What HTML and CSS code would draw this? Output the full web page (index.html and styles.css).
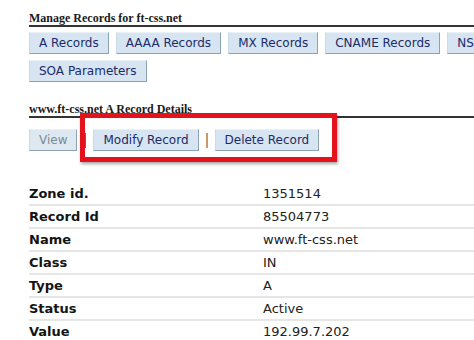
FILE: index.html
```html
<!DOCTYPE html>
<html lang="en">
<head>
    <meta charset="UTF-8">
    <meta name="viewport" content="width=device-width, initial-scale=1.0">
    <title>Manage Records</title>
    <link rel="stylesheet" href="styles.css">
</head>
<body>
    <div class="page">
        <h3 class="section-title">Manage Records for ft-css.net</h3>
        <div class="record-tabs">
            <button class="rec-btn">A Records</button>
            <button class="rec-btn">AAAA Records</button>
            <button class="rec-btn">MX Records</button>
            <button class="rec-btn">CNAME Records</button>
            <button class="rec-btn">NS Records</button>
            <button class="rec-btn">SOA Parameters</button>
        </div>

        <h3 class="section-title details-title">www.ft-css.net A Record Details</h3>
        <div class="actions">
            <button class="rec-btn disabled">View</button>
            <span class="sep"></span>
            <button class="rec-btn">Modify Record</button>
            <span class="sep sep-warm"></span>
            <button class="rec-btn">Delete Record</button>
            <div class="highlight"></div>
        </div>

        <table class="details">
            <tr><th>Zone id.</th><td>1351514</td></tr>
            <tr><th>Record Id</th><td>85504773</td></tr>
            <tr><th>Name</th><td>www.ft-css.net</td></tr>
            <tr><th>Class</th><td>IN</td></tr>
            <tr><th>Type</th><td>A</td></tr>
            <tr><th>Status</th><td>Active</td></tr>
            <tr><th>Value</th><td>192.99.7.202</td></tr>
        </table>
    </div>
</body>
</html>
```

FILE: styles.css
```css
* {
    margin: 0;
    padding: 0;
    box-sizing: border-box;
}

body {
    background: #fff;
    color: #111;
    font-family: 'DejaVu Sans', Verdana, sans-serif;
    overflow: hidden;
}

.page {
    width: 560px;
    padding-left: 29px;
    padding-top: 12px;
}

.section-title {
    font-family: 'Liberation Serif', 'Times New Roman', serif;
    font-size: 12px;
    font-weight: bold;
    line-height: 13px;
    color: #1a1a1a;
    border-bottom: 2px solid #333;
}

.details-title {
    margin-top: 21px;
}

.record-tabs {
    display: flex;
    flex-wrap: wrap;
    column-gap: 7px;
    row-gap: 6px;
    margin-top: 5px;
    width: 520px;
}

.rec-btn {
    height: 22px;
    padding: 0 9px;
    background: #d6e5f1;
    color: #1c2b6a;
    font-family: 'DejaVu Sans', Verdana, sans-serif;
    font-size: 12px;
    line-height: 20px;
    border: 1px solid;
    border-color: #eaf2f8 #8ba1b4 #8ba1b4 #c9dae8;
    cursor: pointer;
    white-space: nowrap;
}

.rec-btn.disabled {
    background: #dde8f1;
    color: #7d8a97;
}

.actions {
    position: relative;
    display: flex;
    align-items: center;
    gap: 7px;
    margin-top: 11px;
}

.sep {
    width: 2px;
    height: 15px;
    background: #6a6a6a;
}

.sep-warm {
    background: #c99a66;
}

.highlight {
    position: absolute;
    left: 51px;
    top: -16px;
    width: 257px;
    height: 49px;
    border: 5px solid #e3121b;
    box-shadow: 1px 2px 3px rgba(0, 0, 0, 0.35);
    pointer-events: none;
}

.details {
    margin-top: 31px;
    width: 100%;
    border-collapse: collapse;
    font-size: 13px;
}

.details tr {
    border-bottom: 2px solid #e6e6e6;
}

.details th,
.details td {
    height: 23px;
    text-align: left;
    vertical-align: middle;
    padding: 0;
}

.details th {
    width: 234px;
    font-weight: bold;
    color: #141414;
}

.details td {
    color: #222;
}
```
